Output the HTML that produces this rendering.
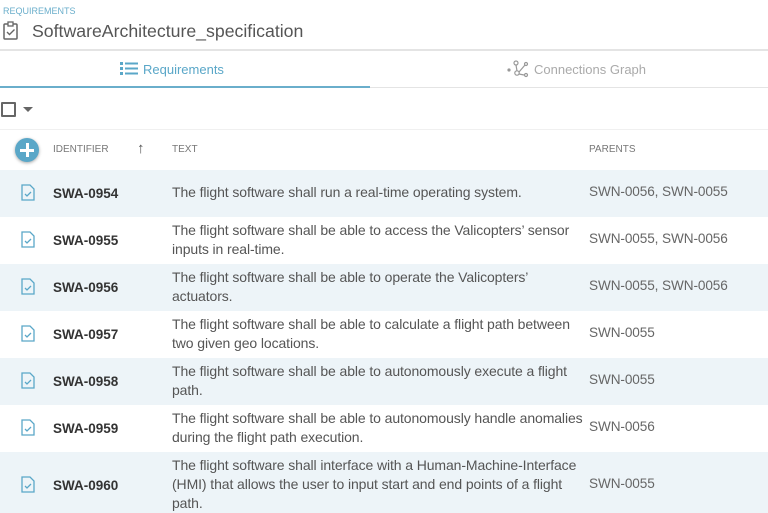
<!DOCTYPE html>
<html><head><style>
*{margin:0;padding:0;box-sizing:border-box}
body{width:768px;height:513px;overflow:hidden;background:#fff;font-family:"Liberation Sans",sans-serif;color:#555;position:relative}
.abs{position:absolute}
.row{position:absolute;left:0;width:768px;height:47px}
.sh{background:#edf4f8}
.id{position:absolute;left:53px;font-weight:bold;font-size:13.5px;color:#333}
.tx{position:absolute;left:172px;width:416px;font-size:14px;line-height:19px;color:#555;letter-spacing:-0.1px}
.pa{position:absolute;left:589px;font-size:13.6px;color:#666;letter-spacing:-0.1px}
.ic{position:absolute;left:21px}
</style></head><body>
<div class="abs" style="left:3px;top:6px;font-size:9px;color:#6aaecb">REQUIREMENTS</div>
<svg class="abs" style="left:3px;top:21px" width="15" height="19" viewBox="0 0 15 19"><rect x="1" y="3" width="13" height="15" rx="1" fill="none" stroke="#666" stroke-width="1.5"/><rect x="5" y="1" width="5" height="4" fill="#fff" stroke="#666" stroke-width="1.3"/><path d="M4 11l2.5 2.5 5-5" fill="none" stroke="#666" stroke-width="1.4"/></svg>
<div class="abs" style="left:32px;top:21px;font-size:17.7px;color:#555">SoftwareArchitecture_specification</div>
<div class="abs" style="left:0;top:49px;width:768px;height:2px;background:#e4e4e4"></div>
<svg class="abs" style="left:120px;top:61px" width="18" height="15" viewBox="0 0 18 15"><g fill="#5aa7c8"><rect x="0" y="1" width="3" height="3"/><rect x="0" y="6" width="3" height="3"/><rect x="0" y="11" width="3" height="3"/><rect x="5" y="1.5" width="13" height="2"/><rect x="5" y="6.5" width="13" height="2"/><rect x="5" y="11.5" width="13" height="2"/></g></svg>
<div class="abs" style="left:143px;top:62px;font-size:13px;color:#5aa7c8">Requirements</div>
<div class="abs" style="left:0;top:86px;width:370px;height:2px;background:#6aaecb"></div>
<div class="abs" style="left:370px;top:87px;width:398px;height:1px;background:#e4e4e4"></div>
<svg class="abs" style="left:507px;top:60px" width="24" height="18" viewBox="0 0 24 18"><g fill="none" stroke="#999" stroke-width="1.2"><circle cx="9" cy="3" r="2"/><circle cx="10" cy="13" r="2.2"/><circle cx="19" cy="4" r="1.5"/><circle cx="19" cy="15" r="1.5"/><path d="M9 5l1 6M12 12l6-7M12 14l5 1"/></g><circle cx="2" cy="10" r="1.6" fill="#999"/></svg>
<div class="abs" style="left:534px;top:62px;font-size:13px;color:#aaa">Connections Graph</div>
<div class="abs" style="left:1px;top:102px;width:15px;height:15px;border:2px solid #666;border-radius:1px"></div>
<div class="abs" style="left:23px;top:107px;width:0;height:0;border-left:5px solid transparent;border-right:5px solid transparent;border-top:5px solid #666"></div>
<div class="abs" style="left:0;top:129px;width:768px;height:1px;background:#f0f0f0"></div>
<div class="abs" style="left:15px;top:138px;width:24px;height:24px;border-radius:50%;background:#5aa7c8;box-shadow:0 1px 3px rgba(0,0,0,.35)"></div>
<div class="abs" style="left:20px;top:149px;width:14px;height:3px;background:#fff"></div>
<div class="abs" style="left:26px;top:143px;width:3px;height:14px;background:#fff"></div>
<div class="abs" style="left:53px;top:144px;font-size:10px;color:#777">IDENTIFIER</div>
<div class="abs" style="left:137px;top:140px;font-size:15px;color:#555;font-weight:bold">↑</div>
<div class="abs" style="left:172px;top:144px;font-size:10px;color:#777">TEXT</div>
<div class="abs" style="left:589px;top:144px;font-size:10px;color:#777">PARENTS</div>

<div class="row sh" style="top:170px"></div>
<div class="row" style="top:217px"></div>
<div class="row sh" style="top:264px"></div>
<div class="row" style="top:311px"></div>
<div class="row sh" style="top:358px"></div>
<div class="row" style="top:405px"></div>
<div class="row sh" style="top:452px;height:61px"></div>

<svg width="0" height="0" style="position:absolute"><defs><symbol id="d" viewBox="0 0 14 17"><path d="M1 1h8l4 4v11H1z" fill="none" stroke="#5aa7c8" stroke-width="1.3"/><path d="M4 10l2 2 4-4" fill="none" stroke="#5aa7c8" stroke-width="1.3"/></symbol></defs></svg>

<svg class="ic" style="top:184px" width="14" height="17"><use href="#d"/></svg>
<div class="id" style="top:186px">SWA-0954</div>
<div class="tx" style="top:183px">The flight software shall run a real-time operating system.</div>
<div class="pa" style="top:184px">SWN-0056, SWN-0055</div>

<svg class="ic" style="top:231px" width="14" height="17"><use href="#d"/></svg>
<div class="id" style="top:233px">SWA-0955</div>
<div class="tx" style="top:221px">The flight software shall be able to access the Valicopters’ sensor inputs in real-time.</div>
<div class="pa" style="top:231px">SWN-0055, SWN-0056</div>

<svg class="ic" style="top:278px" width="14" height="17"><use href="#d"/></svg>
<div class="id" style="top:280px">SWA-0956</div>
<div class="tx" style="top:268px">The flight software shall be able to operate the Valicopters’ actuators.</div>
<div class="pa" style="top:278px">SWN-0055, SWN-0056</div>

<svg class="ic" style="top:325px" width="14" height="17"><use href="#d"/></svg>
<div class="id" style="top:327px">SWA-0957</div>
<div class="tx" style="top:315px">The flight software shall be able to calculate a flight path between two given geo locations.</div>
<div class="pa" style="top:325px">SWN-0055</div>

<svg class="ic" style="top:372px" width="14" height="17"><use href="#d"/></svg>
<div class="id" style="top:374px">SWA-0958</div>
<div class="tx" style="top:362px">The flight software shall be able to autonomously execute a flight path.</div>
<div class="pa" style="top:372px">SWN-0055</div>

<svg class="ic" style="top:419px" width="14" height="17"><use href="#d"/></svg>
<div class="id" style="top:421px">SWA-0959</div>
<div class="tx" style="top:409px">The flight software shall be able to autonomously handle anomalies during the flight path execution.</div>
<div class="pa" style="top:419px">SWN-0056</div>

<svg class="ic" style="top:476px" width="14" height="17"><use href="#d"/></svg>
<div class="id" style="top:478px">SWA-0960</div>
<div class="tx" style="top:456px">The flight software shall interface with a Human-Machine-Interface (HMI) that allows the user to input start and end points of a flight path.</div>
<div class="pa" style="top:476px">SWN-0055</div>
</body></html>
